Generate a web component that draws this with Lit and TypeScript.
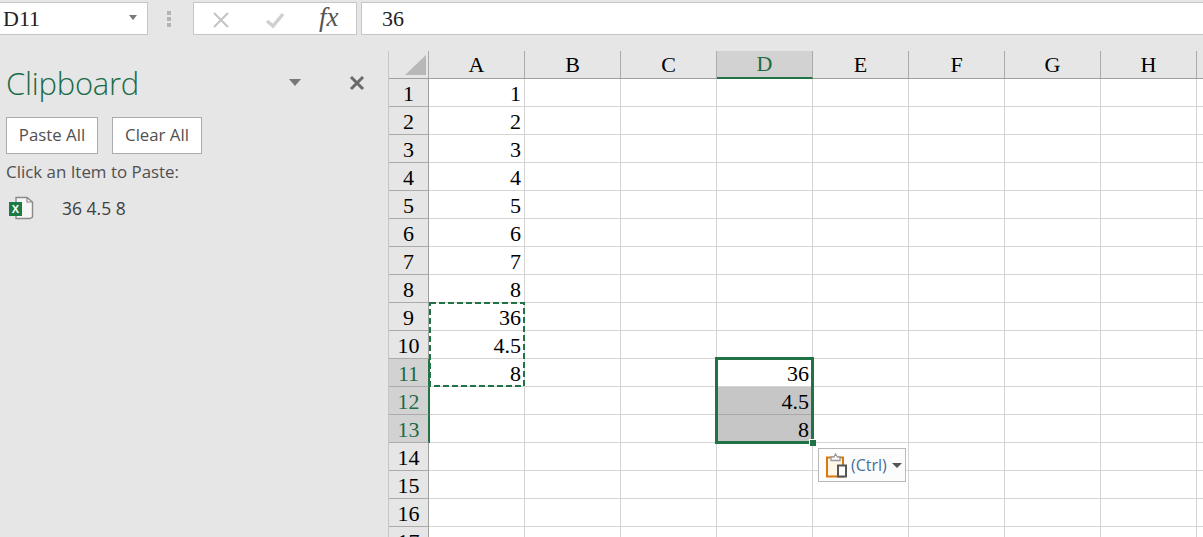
import { LitElement, html, css } from "lit";
import { customElement } from "lit/decorators.js";

const COLS = ["A", "B", "C", "D", "E", "F", "G", "H", ""];
const ROWS = Array.from({ length: 17 }, (_, i) => i + 1);
const DATA: Record<string, string> = {
  A1: "1", A2: "2", A3: "3", A4: "4", A5: "5", A6: "6", A7: "7", A8: "8",
  A9: "36", A10: "4.5", A11: "8", D11: "36", D12: "4.5", D13: "8",
};

@customElement("app-root")
export class AppRoot extends LitElement {
  static styles = css`
    :host { display: block; width: 1203px; height: 537px; overflow: hidden; background: #e6e6e6; position: relative; font-family: "Liberation Serif", serif; color: #000; }
    .bar { display: flex; height: 36px; padding-top: 2px; box-sizing: border-box; align-items: flex-start; }
    .box { background: #fff; border: 1px solid #c6c6c6; height: 33px; box-sizing: border-box; display: flex; align-items: center; font-size: 22px; }
    .name { width: 149px; margin-left: -1px; padding-left: 3px; color: #222; position: relative; }
    .name .caret { position: absolute; right: 10px; top: 12px; width: 0; height: 0; border: 4px solid transparent; border-top: 5px solid #777; border-bottom: 0; }
    .grip { width: 45px; display: flex; flex-direction: column; align-items: center; gap: 2px; padding: 9px 3px 0 0; box-sizing: border-box; }
    .grip i { width: 4px; height: 4px; background: #b4b4b4; display: block; }
    .fx { width: 164px; position: relative; margin-right: 4px; }
    .fx svg { position: absolute; top: 8px; }
    .fx .x { left: 18px; }
    .fx .c { left: 71px; }
    .fx .f { position: absolute; left: 125px; top: -1px; font-style: italic; font-size: 27px; color: #555; line-height: 30px; }
    .input { flex: 1; margin-right: -4px; padding-left: 20px; padding-top: 1px; color: #222; }
    .main { display: flex; height: 501px; }
    .pane { width: 388px; flex: none; padding: 0 0 0 6px; box-sizing: border-box; font-family: "Open Sans", "Noto Sans", sans-serif; color: #505050; position: relative; }
    .title { font-size: 31px; font-weight: 300; color: #1c6b47; line-height: 40px; margin-top: 27px; letter-spacing: -0.25px; }
    .pane .tri { position: absolute; left: 289px; top: 43px; width: 0; height: 0; border: 6.5px solid transparent; border-top: 7px solid #777; border-bottom: 0; }
    .pane .close { position: absolute; left: 349px; top: 39px; }
    .btns { display: flex; gap: 14px; margin-top: 14px; }
    .btn { height: 37px; padding-bottom: 2px; background: #fff; border: 1px solid #ababab; box-sizing: border-box; display: flex; align-items: center; justify-content: center; font-size: 16.8px; color: #505050; }
    .paste { width: 92px; }
    .clear { width: 90px; }
    .hint { font-size: 16.9px; line-height: 22px; margin-top: 7px; color: #505050; }
    .item { display: flex; align-items: center; margin-top: 13px; margin-left: 3px; font-size: 17.5px; color: #404040; }
    .item svg { margin-right: 28px; }
    .sheet { position: relative; flex: 1; min-width: 0; overflow: hidden; border-left: 1px solid #c6c6c6; box-sizing: border-box; margin-top: 15px; }
    .grid { display: grid; grid-template-columns: 40px repeat(8, 96px) 60px; grid-auto-rows: 28px; font-size: 22px; background: #fff; width: max-content; }
    .grid > div { box-sizing: border-box; border-right: 1px solid #d4d4d4; border-bottom: 1px solid #d4d4d4; display: flex; align-items: center; line-height: 1; }
    .cell { justify-content: flex-end; padding-right: 3px; padding-top: 2px; color: #000; }
    .grid > .hc { background: #e6e6e6; border-right: 1px solid #ababab; border-bottom: 1px solid #9f9f9f; justify-content: center; color: #000; }
    .grid > .rh { background: #e6e6e6; border-right: 1px solid #9f9f9f; border-bottom: 1px solid #ababab; justify-content: center; padding-top: 2px; color: #000; }
    .grid > .hc.on { background: #d2d2d2; color: #1d6b45; border-bottom: 2px solid #217346; }
    .grid > .rh.on { background: #d2d2d2; color: #1d6b45; border-right: 1px solid #217346; box-shadow: 1px 0 0 #217346; position: relative; z-index: 1; }
    .grid > .hl { background: #c6c6c6; border-right-color: #c6c6c6; border-bottom-color: #a8a8a8; }
    .grid > .hl.last { box-shadow: inset 0 -1px 0 #fff; }
    .corner { position: relative; height: 28px; }
    .corner svg { position: absolute; left: 16px; top: 4px; }
    .ants { position: absolute; left: 40px; top: 251px; z-index: 2; pointer-events: none; }
    .sel { position: absolute; left: 326px; top: 306px; width: 99px; height: 87px; box-sizing: border-box; border: 3px solid #217346; pointer-events: none; z-index: 2; }
    .handle { position: absolute; right: -5px; bottom: -5px; width: 6px; height: 6px; background: #217346; border-left: 1px solid #fff; border-top: 1px solid #fff; }
    .chip { position: absolute; left: 429px; top: 397px; width: 88px; height: 34px; box-sizing: border-box; background: #fcfcfc; border: 1px solid #b9b9b9; display: flex; align-items: center; padding-left: 7px; font-family: "Open Sans", "Noto Sans", sans-serif; font-size: 16px; color: #46709c; z-index: 3; }
    .chip svg { margin-right: 1px; }
    .chip .dn { width: 0; height: 0; border: 5px solid transparent; border-top: 5px solid #555; border-bottom: 0; margin-left: 5px; }
  `;

  render() {
    return html`
      <div class="bar">
        <div class="box name">D11<span class="caret"></span></div>
        <div class="grip"><i></i><i></i><i></i></div>
        <div class="box fx">
          <svg class="x" width="18" height="18" viewBox="0 0 18 18"><path d="M2 2 L16 16 M16 2 L2 16" stroke="#c4c4c4" stroke-width="2" fill="none"/></svg>
          <svg class="c" width="20" height="18" viewBox="0 0 20 18"><path d="M2 10 L8 15 L18 3" stroke="#cfcfcf" stroke-width="3.4" fill="none"/></svg>
          <span class="f">fx</span>
        </div>
        <div class="box input">36</div>
      </div>
      <div class="main">
        <div class="pane">
          <div class="title">Clipboard</div>
          <span class="tri"></span>
          <svg class="close" width="16" height="16" viewBox="0 0 16 16"><path d="M2 2 L14 14 M14 2 L2 14" stroke="#6a6a6a" stroke-width="3" fill="none"/></svg>
          <div class="btns">
            <div class="btn paste">Paste All</div>
            <div class="btn clear">Clear All</div>
          </div>
          <div class="hint">Click an Item to Paste:</div>
          <div class="item">
            <svg width="25" height="24" viewBox="0 0 25 24">
              <path d="M7 1.5 H18 L23.5 6 V21 L21 22.5 H7 Z" fill="#f6f6f6" stroke="#8a8a8a" stroke-width="1.4"/>
              <path d="M18 1.5 V6 H23.5" fill="none" stroke="#8a8a8a" stroke-width="1.2"/>
              <rect x="0" y="6" width="13" height="14" fill="#1d7a45"/>
              <text x="6.5" y="17" font-family="Liberation Sans, sans-serif" font-size="11" font-weight="700" text-anchor="middle" fill="#fff">X</text>
            </svg>
            36 4.5 8
          </div>
        </div>
        <div class="sheet">
          <div class="grid">
            <div class="hc corner"><svg width="21" height="21" viewBox="0 0 21 21"><path d="M21 0 V20 H0 Z" fill="#b8b8b8"/></svg></div>
            ${COLS.map((c) => html`<div class="hc ${c === "D" ? "on" : ""}">${c}</div>`)}
            ${ROWS.map(
              (r) => html`
                <div class="rh ${r >= 11 && r <= 13 ? "on" : ""}">${r}</div>
                ${COLS.map((c) => {
                  const hl = c === "D" && (r === 12 || r === 13);
                  return html`<div class="cell ${hl ? "hl" : ""} ${hl && r === 13 ? "last" : ""}">${DATA[c + r] ?? ""}</div>`;
                })}
              `
            )}
          </div>
          <svg class="ants" width="96" height="85" viewBox="0 0 96 85"><rect x="1" y="1" width="94" height="83" fill="none" stroke="#217346" stroke-width="2" stroke-dasharray="6 3"/></svg>
          <div class="sel"><span class="handle"></span></div>
          <div class="chip">
            <svg width="24" height="25" viewBox="0 0 24 25">
              <rect x="1" y="4.5" width="16" height="19" fill="#fff6e8" stroke="#d9780f" stroke-width="2"/>
              <path d="M5 7.5 V4 H8 L9.5 1 L11.5 4 H14 V7.5 Z" fill="#fff" stroke="#9a9a9a" stroke-width="1.3"/>
              <rect x="12" y="12.5" width="8" height="11" fill="#fff" stroke="#555" stroke-width="2"/>
            </svg>
            (Ctrl)<span class="dn"></span>
          </div>
        </div>
      </div>
    `;
  }
}
